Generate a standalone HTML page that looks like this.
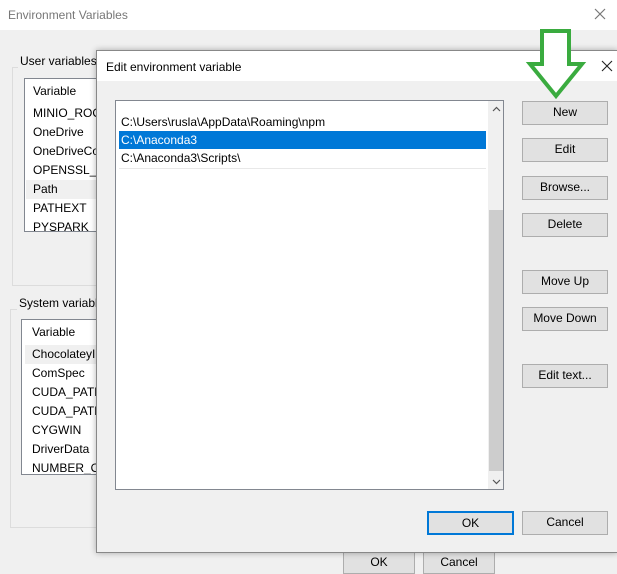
<!DOCTYPE html><html><head><style>
body{margin:0;width:617px;height:555px;overflow:hidden;background:#f0f0f0;font-family:"Liberation Sans",sans-serif;font-size:12px;color:#000;position:relative}
.a{position:absolute}
.btn{position:absolute;background:#e1e1e1;border:1px solid #adadad;box-sizing:border-box;text-align:center;line-height:21px;font-size:12px}
.lb{background:#fff;border:1px solid #828790;box-sizing:border-box;overflow:hidden}
.row{position:absolute;left:8px;white-space:nowrap}
</style></head><body>
<div class="a" style="left:0;top:0;width:617px;height:30px;background:#fff"></div>
<div class="a" style="left:8px;top:8px;color:#777;font-size:12px">Environment Variables</div>
<svg class="a" style="left:594px;top:8px" width="12" height="12"><path d="M1 1L11 11M11 1L1 11" stroke="#777" stroke-width="1.2"/></svg>
<div class="a" style="left:12px;top:67px;width:120px;height:217px;border:1px solid #dcdcdc"></div>
<div class="a" style="left:18px;top:54px;background:#f0f0f0;padding:0 2px">User variables for</div>
<div class="a lb" style="left:24px;top:78px;width:90px;height:154px">
<div class="row" style="top:5px">Variable</div>
<div class="row" style="top:27px">MINIO_ROOT</div><div class="row" style="top:46px">OneDrive</div><div class="row" style="top:65px">OneDriveCo</div><div class="row" style="top:84px">OPENSSL_ia</div>
<div class="a" style="left:1px;top:101px;width:90px;height:19px;background:#f0f0f0"></div>
<div class="row" style="top:103px">Path</div><div class="row" style="top:122px">PATHEXT</div><div class="row" style="top:141px">PYSPARK_DR</div></div>
<div class="a" style="left:10px;top:309px;width:120px;height:217px;border:1px solid #dcdcdc"></div>
<div class="a" style="left:17px;top:296px;background:#f0f0f0;padding:0 2px">System variables</div>
<div class="a lb" style="left:21px;top:319px;width:90px;height:156px">
<div class="row" style="top:5px;left:10px">Variable</div>
<div class="a" style="left:3px;top:25px;width:90px;height:19px;background:#f0f0f0"></div>
<div class="row" style="top:27px;left:10px">ChocolateyI</div><div class="row" style="top:46px;left:10px">ComSpec</div><div class="row" style="top:65px;left:10px">CUDA_PATH</div><div class="row" style="top:84px;left:10px">CUDA_PATH</div><div class="row" style="top:103px;left:10px">CYGWIN</div><div class="row" style="top:122px;left:10px">DriverData</div><div class="row" style="top:141px;left:10px">NUMBER_OF</div></div>
<div class="btn" style="left:343px;top:551px;width:72px">OK</div><div class="btn" style="left:423px;top:551px;width:72px">Cancel</div>

<div class="a" style="left:96px;top:50px;width:522px;height:503px;border:1px solid #888;box-sizing:border-box;background:#f0f0f0;box-shadow:0 0 6px rgba(0,0,0,.3)">
<div class="a" style="left:0;top:0;width:520px;height:30px;background:#fff"></div>
<div class="a" style="left:9px;top:9px">Edit environment variable</div>
<svg class="a" style="left:504px;top:9px" width="12" height="12"><path d="M1 1L11 11M11 1L1 11" stroke="#222" stroke-width="1.1"/></svg>
<div class="a lb" style="left:18px;top:49px;width:389px;height:390px">
<div class="a" style="left:3px;top:30px;width:367px;height:18px;background:#0078d7"></div>
<div class="row" style="left:5px;top:14px">C:\Users\rusla\AppData\Roaming\npm</div>
<div class="row" style="left:5px;top:32px;color:#fff">C:\Anaconda3</div>
<div class="row" style="left:5px;top:50px">C:\Anaconda3\Scripts\</div>
<div class="a" style="left:3px;top:67px;width:367px;height:1px;background:#e8e8e8"></div>
<div class="a" style="left:372px;top:0;width:16px;height:388px;background:#f0f0f0"></div>
<div class="a" style="left:373px;top:109px;width:14px;height:261px;background:#cdcdcd"></div>
<svg class="a" style="left:376px;top:5px" width="9" height="6"><path d="M1 5L4.5 1.5L8 5" fill="none" stroke="#555" stroke-width="1.2"/></svg>
<svg class="a" style="left:376px;top:378px" width="9" height="6"><path d="M1 1L4.5 4.5L8 1" fill="none" stroke="#555" stroke-width="1.2"/></svg>
</div>
<div class="btn" style="left:425px;top:50px;width:86px;height:24px">New</div>
<div class="btn" style="left:425px;top:87px;width:86px;height:24px">Edit</div>
<div class="btn" style="left:425px;top:125px;width:86px;height:24px">Browse...</div>
<div class="btn" style="left:425px;top:162px;width:86px;height:24px">Delete</div>
<div class="btn" style="left:425px;top:219px;width:86px;height:24px">Move Up</div>
<div class="btn" style="left:425px;top:256px;width:86px;height:24px">Move Down</div>
<div class="btn" style="left:425px;top:313px;width:86px;height:24px">Edit text...</div>
<div class="btn" style="left:330px;top:460px;width:87px;height:24px;border:2px solid #0078d7;line-height:20px">OK</div>
<div class="btn" style="left:425px;top:460px;width:86px;height:24px">Cancel</div>
</div>
<svg class="a" style="left:0;top:0" width="617" height="555"><path d="M542 31 H569 V64 H582 L556 96 L530 64 H542 Z" fill="#fff" stroke="#3aab3f" stroke-width="4" stroke-linejoin="miter"/></svg>
</body></html>
